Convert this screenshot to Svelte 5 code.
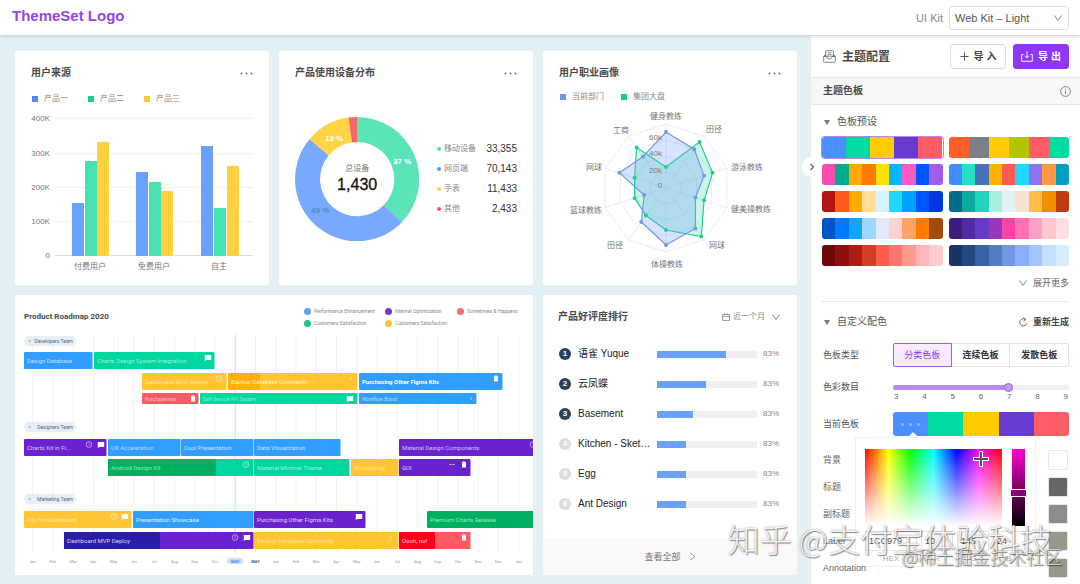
<script>
  const barTicks = [
    { label: '400K', y: 10 },
    { label: '300K', y: 45 },
    { label: '200K', y: 79 },
    { label: '100K', y: 113 },
    { label: '0', y: 147 }
  ];
  const barGroups = [
    { label: '付费用户', cx: 59, bars: [[41, 95], [54, 53], [66, 34]] },
    { label: '免费用户', cx: 123, bars: [[105, 64], [118, 74], [130, 83]] },
    { label: '自主', cx: 188, bars: [[170, 38], [183, 100], [196, 58]] }
  ];
  const barColors = ['#6aa1ff', '#46e2b1', '#ffd23d'];

  function polar(cx, cy, r, deg) {
    const a = (deg * Math.PI) / 180;
    return [cx + r * Math.sin(a), cy - r * Math.cos(a)];
  }
  function ringSlice(from, to, R = 62, r = 37, c = 62) {
    const big = to - from > 180 ? 1 : 0;
    const [x1, y1] = polar(c, c, R, from);
    const [x2, y2] = polar(c, c, R, to);
    const [x3, y3] = polar(c, c, r, to);
    const [x4, y4] = polar(c, c, r, from);
    return `M${x1} ${y1}A${R} ${R} 0 ${big} 1 ${x2} ${y2}L${x3} ${y3}A${r} ${r} 0 ${big} 0 ${x4} ${y4}Z`;
  }
  const slices = [
    { d: ringSlice(0, 134), color: '#5ce4b9' },
    { d: ringSlice(134, 310), color: '#77a9ff' },
    { d: ringSlice(310, 352), color: '#ffd545' },
    { d: ringSlice(352, 360), color: '#fb6468' }
  ];
  const devices = [
    { name: '移动设备', value: '33,355', color: '#4fdfae' },
    { name: '网页端', value: '70,143', color: '#5b97f7' },
    { name: '手表', value: '11,433', color: '#fbd145' },
    { name: '其他', value: '2,433', color: '#f5525c' }
  ];

  const rx = 107;
  const ry = 85;
  const blue = [56, 48, 40, 31, 50, 57, 42, 23, 49, 39];
  const green = [21, 57, 49, 40, 60, 42, 34, 33, 33, 50];
  const toPoints = (vals) => vals.map((v, i) => polar(rx, ry, v, i * 36));
  const asString = (pts) => pts.map((p) => p.join(',')).join(' ');
  const bluePts = toPoints(blue);
  const greenPts = toPoints(green);
  const radarRings = [16, 32, 48, 64].map((r) => asString(toPoints(Array(10).fill(r))));
  const radarLabels = [
    ['健身教练', 107, 13], ['田径', 155, 26], ['游泳教练', 188, 64], ['健美操教练', 192, 106],
    ['网球', 158, 142], ['体操教练', 108, 161], ['田径', 56, 142], ['篮球教练', 27, 107],
    ['网球', 35, 64], ['工商', 62, 27]
  ];

  const roadLegend = [
    ['Performance Enhancement', '#5aa5ee'], ['Internal Optimization', '#7238c8'], ['Sometimes & Happens', '#f2707c'],
    ['Customers Satisfaction', '#1cc58e'], ['Customers Satisfaction', '#f5c242']
  ];
  const months = ['Jan', 'Feb', 'Mar', 'Apr', 'May', 'Jun', 'Jul', 'Aug', 'Sep', 'Oct', 'NOV', 'MAY',
    'Jan', 'Feb', 'Mar', 'Apr', 'May', 'Jun', 'Jul', 'Aug', 'Sep', 'Oct', 'Nov', 'Dec', 'Jan'];
  const teams = [['Developers Team', 1], ['Designers Team', 87], ['Marketing Team', 159]];
  const B = '#309dff';
  const G = '#00d79f';
  const Y = '#ffc535';
  const P = '#6a22cf';
  const R = '#ff5a63';
  const tasks = [
    { x: 0, y: 17, w: 69, c: B, t: 'Design Database', f: '#bfe0ff' },
    { x: 70, y: 17, w: 121, c: G, t: 'Charts Design System Integration', f: '#9af3da', icons: [['chat', 184]] },
    { x: 118, y: 38, w: 85, c: Y, t: 'Dashboard MVP Deploy', f: '#ffe7a8', icons: [['clock', 195]] },
    { x: 204, y: 38, w: 130, c: Y, dw: 32, dc: '#ffb00d', t: 'Backup Database Constantly', f: '#fff0c4', icons: [['info', 327]] },
    { x: 335, y: 38, w: 144, c: B, t: 'Purchasing Other Figma Kits', f: '#fff', bold: true, icons: [['trash', 472]] },
    { x: 118, y: 58, w: 57, h: 11, c: R, t: 'Purchase now', f: '#ffc4c8', icons: [['trash', 169]] },
    { x: 176, y: 58, w: 158, h: 11, c: G, t: 'Self-Service API System', f: '#8df0d4', icons: [['chat', 326]] },
    { x: 335, y: 58, w: 118, h: 11, c: B, t: 'Workflow Boost', f: '#b9dcff', icons: [['info', 447]] },
    { x: 0, y: 104, w: 83, c: P, t: 'Charts Kit in Fi...', f: '#dccbf6', icons: [['clock', 65], ['chat', 77]] },
    { x: 84, y: 104, w: 73, c: B, t: 'UX Acceleration', f: '#b9dcff' },
    { x: 157, y: 104, w: 73, c: B, t: 'Cool Presentation', f: '#c9e5ff' },
    { x: 230, y: 104, w: 87, c: B, t: 'Data Visualization', f: '#c9e5ff' },
    { x: 375, y: 104, w: 136, c: P, t: 'Material Design Components', f: '#d9c6f5', icons: [['clock', 509]] },
    { x: 84, y: 124, w: 146, c: G, dw: 108, dc: '#00b061', t: 'Android Design Kit', f: '#97e6bf', icons: [['clock', 222]] },
    { x: 230, y: 124, w: 96, c: G, t: 'Material Minimal Theme', f: '#9af3da' },
    { x: 327, y: 124, w: 48, c: Y, t: 'Prototyping', f: '#ffe49c' },
    { x: 375, y: 124, w: 72, c: P, t: 'GUI', f: '#dccbf6', icons: [['link', 428], ['trash', 440]] },
    { x: 0, y: 176, w: 108, c: Y, t: 'Fits for Dashboard', f: '#ffe7a8', icons: [['clock', 90], ['chat', 101]] },
    { x: 109, y: 176, w: 121, c: B, t: 'Presentation Showcase', f: '#e6f3ff' },
    { x: 230, y: 176, w: 112, c: P, t: 'Purchasing Other Figma Kits', f: '#e2d4f8', icons: [['chat', 335]] },
    { x: 403, y: 176, w: 108, c: '#00b061', t: 'Premium Charts Release', f: '#9ce8c2' },
    { x: 40, y: 197, w: 190, c: P, dw: 96, dc: '#2a1ea8', t: 'Dashboard MVP Deploy', f: '#d8d4f4', icons: [['clock', 211], ['chat', 223]] },
    { x: 230, y: 197, w: 145, c: Y, t: 'Backup Database Constantly', f: '#ffe49c', icons: [['info', 367]] },
    { x: 375, y: 197, w: 72, c: R, dw: 36, dc: '#fb0019', t: 'Oooh, no!', f: '#ffd9dc', icons: [['trash', 440]] }
  ];

  const ranking = [
    ['语雀 Yuque', 69], ['云凤蝶', 49], ['Basement', 36],
    ['Kitchen - Sket…', 29], ['Egg', 29], ['Ant Design', 29]
  ];

  const presets = [
    ['#4a90ff', '#00dba2', '#ffcb00', '#673bd0', '#ff5d66'],
    ['#ff5e2b', '#7c7f88', '#ffcc05', '#b3c400', '#ff5d66', '#00dba2'],
    ['#fb4bb1', '#00ac8a', '#ffa808', '#ff7a00', '#ffe103', '#00b7ff', '#fb5cbf', '#0055ff', '#a35bea'],
    ['#3f8cff', '#25dfc6', '#4a70bb', '#ffb300', '#ff5b52', '#1fd8ff', '#8b74ee', '#ff9845', '#009fbf'],
    ['#b31414', '#ff5b1c', '#ffab00', '#ffde94', '#d6f4fb', '#1fd8ff', '#00a2ff', '#0055ff', '#0038e0'],
    ['#006d8c', '#0aaa9f', '#23d3bb', '#a8eee1', '#e3f3f4', '#f7e3cf', '#ffbd4d', '#f09000', '#bf3a0c'],
    ['#0053c9', '#007bff', '#0fa5ff', '#9ed7ff', '#e6e8fb', '#ffd1d1', '#ffa366', '#ff7b00', '#a04c08'],
    ['#3f1d7f', '#512aa5', '#673bc8', '#9a36bd', '#ff42a4', '#ff72b2', '#ff9fc6', '#ffc7d0', '#ffdfe3'],
    ['#6e0708', '#8e0e0e', '#ae1c14', '#d03f28', '#ff5b50', '#ff7669', '#ff9a8e', '#ffb6b9', '#ffcccd'],
    ['#183566', '#254880', '#3862a5', '#527dc4', '#7098e2', '#8aaefb', '#a5c4ff', '#c3e0ff', '#d7ecff']
  ];
  const current = presets[0];
  const textColors = [
    ['背景', '#ffffff'], ['标题', '#666666'], ['副标题', '#8c8c8c'], ['Label', '#97978c'], ['Annotation', '#97978c']
  ];
  const channels = [['HEX', '1CC979'], ['R', '10'], ['G', '145'], ['B', '24']];

  let kind = $state('分类色板');
  let count = $state(7);
  let selected = $state(0);
  let fill = $derived(((count - 3) / 6) * 100);
</script>

{#snippet more()}
  <button class="more" aria-label="更多">
    <svg width="13" height="3" viewBox="0 0 13 3"><circle cx="1.5" cy="1.5" r="1" /><circle cx="6.5" cy="1.5" r="1" /><circle cx="11.5" cy="1.5" r="1" /></svg>
  </button>
{/snippet}

{#snippet chevron()}
  <svg class="chev" width="10" height="8" viewBox="0 0 10 8"><path d="M1.5 1.5L5 6.5L8.5 1.5" /></svg>
{/snippet}

<div class="app">
  <header class="top">
    <a class="logo" href="#home">ThemeSet Logo</a>
    <div class="kit">
      <label for="kit">UI Kit</label>
      <div class="select">
        <select id="kit"><option>Web Kit – Light</option><option>Web Kit – Dark</option></select>
        {@render chevron()}
      </div>
    </div>
  </header>

  <div class="body">
    <main class="board">
      <section class="card">
        <div class="head"><h2>用户来源</h2>{@render more()}</div>
        <ul class="legend">
          <li><i style="background:#5089ee"></i>产品一</li>
          <li><i style="background:#22cf93"></i>产品二</li>
          <li><i style="background:#f7c93e"></i>产品三</li>
        </ul>
        <svg class="chart" viewBox="0 0 222 168">
          {#each barTicks as t}
            <line class="grid" class:base={t.label === '0'} x1="24" x2="222" y1={t.y + 0.5} y2={t.y + 0.5} />
            <text x="19" y={t.y + 3} text-anchor="end">{t.label}</text>
          {/each}
          {#each barGroups as g}
            {#each g.bars as b, i}
              <rect x={b[0]} y={b[1]} width="12" height={148 - b[1]} fill={barColors[i]} />
            {/each}
            <text x={g.cx} y="161" text-anchor="middle">{g.label}</text>
          {/each}
        </svg>
      </section>

      <section class="card">
        <div class="head"><h2>产品使用设备分布</h2>{@render more()}</div>
        <div class="donut">
          <svg viewBox="0 0 124 124">
            {#each slices as s}<path d={s.d} fill={s.color} />{/each}
            <text class="pct" x="107" y="47" text-anchor="middle">37 %</text>
            <text class="pct" x="39" y="24" text-anchor="middle">13 %</text>
            <text class="pct dim" x="25" y="96" text-anchor="middle">49 %</text>
            <text x="62" y="54" text-anchor="middle">总设备</text>
            <text class="total" x="62" y="73" text-anchor="middle">1,430</text>
          </svg>
          <ul>
            {#each devices as d}
              <li><i style="background:{d.color}"></i><span>{d.name}</span><b>{d.value}</b></li>
            {/each}
          </ul>
        </div>
      </section>

      <section class="card">
        <div class="head"><h2>用户职业画像</h2>{@render more()}</div>
        <ul class="legend wide">
          <li><i style="background:#6b95f5"></i>当前部门</li>
          <li><i style="background:#12cd8a"></i>集团大盘</li>
        </ul>
        <svg class="chart" viewBox="0 0 222 174">
          {#each radarRings as ring}<polygon class="ring" points={ring} />{/each}
          {#each toPoints(Array(10).fill(64)) as p}<line class="ring" x1={rx} y1={ry} x2={p[0]} y2={p[1]} />{/each}
          <polygon points={asString(greenPts)} fill="#2fd9a0" fill-opacity=".25" stroke="#22cf93" stroke-width="1.2" />
          <polygon points={asString(bluePts)} fill="#6a9bff" fill-opacity=".27" stroke="#6f9ae8" stroke-width="1.2" />
          {#each greenPts as p}<circle cx={p[0]} cy={p[1]} r="2" fill="#22cf93" />{/each}
          {#each bluePts as p}<circle cx={p[0]} cy={p[1]} r="2" fill="#6f9ae8" />{/each}
          <text x="103" y="37" text-anchor="end">60k</text>
          <text x="103" y="53" text-anchor="end">40k</text>
          <text x="103" y="70" text-anchor="end">20k</text>
          <text x="103" y="85" text-anchor="end">0</text>
          {#each radarLabels as l}<text x={l[1]} y={l[2] + 3} text-anchor="middle">{l[0]}</text>{/each}
        </svg>
      </section>

      <section class="card road">
        <div class="roadhead">
          <h2>Product Roadmap 2020</h2>
          <ul>
            {#each roadLegend as l}<li><i style="background:{l[1]}"></i>{l[0]}</li>{/each}
          </ul>
        </div>
        <svg viewBox="0 0 509 235">
          {#each months as m, i}
            {@const x = 8.7 + i * 20.25}
            <line x1={x} x2={x} y1="0" y2="218" stroke={i === 10 ? '#bfdcf5' : '#eff2f5'} />
            {#if i === 10}<rect x={x - 8} y="223" width="16" height="6" rx="3" fill="#c4e1ff" />{/if}
            <text class="month" class:now={i === 10} class:strong={i === 11} {x} y="228" text-anchor="middle">{m}</text>
          {/each}
          {#each teams as t}
            <rect x="0" y={t[1]} width="52" height="10" rx="5" fill="#e8eef5" />
            <path d="M4.5 {t[1] + 4.5}h2.4l-1.2 1.6z" fill="#6b7a90" />
            <text class="team" x="49" y={t[1] + 7} text-anchor="end">{t[0]}</text>
          {/each}
          {#each tasks as k}
            {@const h = k.h ?? 17}
            <rect x={k.x} y={k.y} width={k.w - 0.5} height={h} rx="1" fill={k.c} />
            {#if k.dw}<rect x={k.x} y={k.y} width={k.dw} height={h} rx="1" fill={k.dc} />{/if}
            <text class="task" class:bold={k.bold} class:small={h < 12} x={k.x + 3} y={k.y + h / 2 + 2} fill={k.f}>{k.t}</text>
            {#each k.icons ?? [] as ic}
              <g transform="translate({ic[1]} {k.y + 5.5})">
                {#if ic[0] === 'chat'}<path d="M-3.2 -2.5h6.4v5h-4.8l-1.6 1z" fill="#fff" />
                {:else if ic[0] === 'clock'}<circle r="2.8" fill="none" stroke="#fff" stroke-opacity=".65" stroke-width=".8" /><path d="M0 -1.6V.2H1.4" fill="none" stroke="#fff" stroke-opacity=".65" stroke-width=".6" />
                {:else if ic[0] === 'trash'}<path d="M-2 -2.2h4v4.8q0 .4-.4.4h-3.2q-.4 0-.4-.4zM-1.2 -2.9h2.400v1.100h-2.400z" fill="#fff" />
                {:else if ic[0] === 'link'}<path d="M-2.4 0h1.8M.6 0h1.8" stroke="#fff" stroke-opacity=".8" />
                {:else}<path d="M0 -1.6V-.6M0 0V1.6" stroke="#fff" stroke-opacity=".75" />{/if}
              </g>
            {/each}
          {/each}
        </svg>
      </section>

      <section class="card rank">
        <div class="head">
          <h2>产品好评度排行</h2>
          <button class="month-pick">
            <svg width="8" height="8" viewBox="0 0 8 8"><path d="M.5 1.5h7v6h-7zM.5 3.5h7M2.5 .3v2M5.5 .3v2" /></svg>
            近一个月
            {@render chevron()}
          </button>
        </div>
        <ol>
          {#each ranking as r, i}
            <li>
              <span class="no" class:lead={i < 3}>{i + 1}</span>
              <span class="name">{r[0]}</span>
              <span class="track"><span style="width:{r[1]}%"></span></span>
              <span class="val">83%</span>
            </li>
          {/each}
        </ol>
        <a class="all" href="#all">查看全部
          <svg width="7" height="9" viewBox="0 0 7 9"><path d="M1 1L6 4.5L1 8" /></svg>
        </a>
      </section>
    </main>

    <aside class="panel">
      <button class="fold" aria-label="收起">
        <svg width="6" height="8" viewBox="0 0 6 8"><path d="M1.5 1L4.5 4L1.5 7" /></svg>
      </button>
      <div class="phead">
        <svg width="13" height="13" viewBox="0 0 13 13"><path d="M.7 6.2v5.3q0 .8.8.8h10q.8 0 .8-.8V6.2zM.7 6.2L2.6 4.6M12.3 6.2L10.4 4.6M2.6 6V1.4q0-.7.7-.7h6.4q.7 0 .7.7V6M4.6 2.8h3.8M4.6 4.7h3.8M.7 6.4h2.6q1 2.6 3.2 2.6T9.700 6.400h2.600" /></svg>
        <h2>主题配置</h2>
        <button class="btn">
          <svg width="9" height="9" viewBox="0 0 9 9"><path d="M4.5 .5v8M.5 4.500h8" /></svg>导 入
        </button>
        <button class="btn primary">
          <svg width="12" height="11" viewBox="0 0 12 11"><path d="M2.500 3.500H.7v6.800h10.600V3.500H9.500M6 .2v6.500M3.900 4.700L6 6.900L8.100 4.700" /></svg>导 出
        </button>
      </div>
      <div class="bar">
        <h3>主题色板</h3>
        <svg width="11" height="11" viewBox="0 0 11 11"><circle cx="5.500" cy="5.500" r="4.900" /><path d="M5.500 4.600v3.700M5.500 2.700v1" /></svg>
      </div>

      <div class="section">
        <h4><span class="tri"></span>色板预设</h4>
        <div class="presets">
          {#each presets as p, i}
            <button class="strip" class:on={selected === i} aria-label="色板 {i + 1}" onclick={() => (selected = i)}>
              {#each p as c}<span style="background:{c}"></span>{/each}
            </button>
          {/each}
        </div>
        <button class="link expand">{@render chevron()}展开更多</button>
        <hr />
        <div class="row">
          <h4><span class="tri"></span>自定义配色</h4>
          <button class="link dark">
            <svg width="9" height="10" viewBox="0 0 9 10"><path d="M7.800 6.400A3.600 3.600 0 1 1 6.300 2.300M4.500 .5L6.700 2.500L4.400 4" /></svg>重新生成
          </button>
        </div>

        <div class="form">
          <span>色板类型</span>
          <div class="seg" role="radiogroup" aria-label="色板类型">
            {#each ['分类色板', '连续色板', '发散色板'] as k}
              <label class:on={kind === k}><input type="radio" name="kind" value={k} bind:group={kind} />{k}</label>
            {/each}
          </div>
          <label class="lift" for="count">色彩数目</label>
          <div class="slider">
            <input id="count" type="range" min="3" max="9" bind:value={count}
              style="background:linear-gradient(to right,#b98aee {fill}%,#f0f0f2 {fill}%)" />
            <div class="ticks">{#each [3, 4, 5, 6, 7, 8, 9] as n}<span>{n}</span>{/each}</div>
          </div>
          <span>当前色板</span>
          <div class="strip now">
            {#each current as c, i}
              <button style="background:{c}" aria-label="颜色 {i + 1}">{#if i === 0}<i></i><i></i><i></i><b></b>{/if}</button>
            {/each}
          </div>
        </div>

        <div class="texts">
          {#each textColors as t}
            <div class="trow"><span>{t[0]}</span><button style="background:{t[1]}" aria-label="{t[0]}颜色"></button></div>
          {/each}
          <div class="picker">
            <div class="field">
              <svg width="16" height="16" viewBox="0 0 16 16"><path d="M8 0v16M0 8h16" stroke="#fff" stroke-width="4" /><path d="M8 1v14M1 8h14" stroke="#555" stroke-width="2" /></svg>
            </div>
            <div class="tone"><span></span></div>
            <div class="inputs">
              {#each channels as c}
                <label><input value={c[1]} />{c[0]}</label>
              {/each}
            </div>
          </div>
        </div>
      </div>
    </aside>
  </div>

  <div class="mark big">知乎 @支付宝体验科技</div>
  <div class="mark small">@稀土掘金技术社区</div>
</div>

<style>
  :global(body) { margin: 0; overflow: hidden; }
  * { box-sizing: border-box; }
  .app {
    position: relative; height: 100vh; overflow: hidden; display: flex; flex-direction: column;
    font-family: "Liberation Sans", "Noto Sans CJK SC", sans-serif; font-size: 10px; line-height: 12px;
    color: #444; background: #e5f0f5;
  }
  h2, h3, h4, ul, ol { margin: 0; padding: 0; list-style: none; }
  h2 { font-size: 10px; line-height: 12px; font-weight: 700; color: #4a4a4a; }
  button { font: inherit; color: inherit; border: 0; background: none; padding: 0; margin: 0; }
  svg { flex: none; }
  i { flex: none; }

  .top {
    flex: none; height: 35px; padding: 0 11px 0 12px; display: flex; align-items: center; justify-content: space-between;
    background: #fff; box-shadow: 0 1px 4px rgba(0, 0, 0, .18); position: relative; z-index: 2;
  }
  .logo { font-size: 15px; line-height: 20px; font-weight: 700; padding-bottom: 3px; color: #9544e6; text-decoration: none; }
  .kit { display: flex; align-items: center; gap: 6px; color: #888; font-size: 11px; }
  .select { display: grid; align-items: center; width: 120px; }
  .select > :global(*) { grid-area: 1 / 1; }
  .select :global(.chev) { justify-self: end; margin-right: 6px; pointer-events: none; }
  select {
    appearance: none; font: inherit; color: #555; background: #fff; border: 1px solid #ddd; border-radius: 3px;
    height: 24px; width: 100%; padding: 0 5px;
  }
  .chev path { fill: none; stroke: #888; stroke-width: 1; }

  .body { flex: 1; min-height: 0; display: grid; grid-template-columns: 1fr 269px; }
  .board {
    padding: 16px 14px 9px 15px; display: grid; gap: 10px; align-content: start;
    grid-template-columns: repeat(3, 1fr); grid-template-rows: auto 280px;
  }
  .card { background: #fff; border-radius: 2px; padding: 16px 16px 8px; min-width: 0; display: flex; flex-direction: column; }
  .head { display: flex; justify-content: space-between; align-items: center; height: 12px; }
  .more { display: flex; fill: #777; }
  .legend { display: flex; gap: 20px; margin-top: 14px; padding-left: 1px; font-size: 8px; color: #888; }
  .legend.wide { gap: 17px; margin-top: 12px; }
  .legend li { display: flex; align-items: center; gap: 6px; }
  .legend i { width: 6px; height: 6px; }
  .chart { display: block; width: 100%; }
  .chart text, .donut text { font-size: 8px; fill: #777; }
  .legend + .chart { margin-top: 3px; }
  .legend.wide + .chart { margin-top: 0; }
  .grid { stroke: #efefef; }
  .grid.base { stroke: #ddd; }
  .ring { fill: none; stroke: #e6e6ea; stroke-width: .8; }

  .donut { display: flex; align-items: center; justify-content: space-between; margin-top: 38px; }
  .donut svg { width: 56%; }
  .donut ul { width: 80px; }
  .donut li { display: flex; align-items: center; height: 20px; font-size: 8px; color: #888; }
  .donut li i { width: 4px; height: 4px; border-radius: 50%; margin-right: 3px; }
  .donut b { margin-left: auto; font-weight: 400; font-size: 10px; color: #333; }
  .donut .pct { fill: #fff; font-weight: 700; }
  .donut .dim { fill: #5577b5; font-weight: 400; }
  .donut .total { font-size: 16px; fill: #111; stroke: #111; stroke-width: .3; }

  .road { grid-column: span 2; padding: 10px 0 5px 9px; font-family: Roboto, "Open Sans", sans-serif; }
  .roadhead { display: flex; justify-content: space-between; align-items: center; margin-bottom: 6px; }
  .roadhead h2 { font-size: 8px; font-weight: 700; }
  .roadhead ul { display: grid; grid-template-columns: 81px 72px 76px; }
  .roadhead li { display: flex; align-items: center; gap: 3px; font-size: 5px; line-height: 12px; color: #888; }
  .roadhead li i { width: 7px; height: 7px; border-radius: 50%; }
  .road svg { width: 100%; display: block; }
  .month { font-size: 4px; fill: #999; }
  .month.now { fill: #3a86e0; font-weight: 700; }
  .month.strong { fill: #555; font-weight: 700; }
  .team { font-size: 5px; fill: #56657c; }
  .task { font-size: 6px; }
  .task.small { font-size: 5px; }
  .task.bold { font-weight: 700; }

  .rank { padding: 16px 0 0; }
  .rank .head { padding: 0 16px 0 15px; }
  .month-pick { display: flex; align-items: center; gap: 3px; font-size: 8px; color: #888; }
  .month-pick > svg:first-child path, .all path { fill: none; stroke: #888; stroke-width: .8; }
  .month-pick :global(.chev) { margin-left: 3px; }
  .rank ol { padding: 0 18px 0 16px; margin-top: 16px; }
  .rank li { display: grid; grid-template-columns: 12px 74px 1fr 16px; column-gap: 6px; align-items: center; height: 30px; }
  .no { width: 12px; height: 12px; border-radius: 50%; background: #dcdcdc; color: #fff; font-size: 8px; font-weight: 700; text-align: center; }
  .no.lead { background: #27425a; }
  .name { white-space: nowrap; color: #222; padding-left: 1px; }
  .track { height: 7px; background: #f0f0f0; }
  .track span { display: block; height: 7px; background: #6aa1ff; }
  .val { font-size: 8px; color: #888; }
  .all {
    margin-top: auto; height: 37px; display: flex; align-items: center; justify-content: center; gap: 8px;
    background: #f9f9f9; color: #777; font-size: 9px; text-decoration: none;
  }

  .panel { position: relative; background: #fff; margin-top: 1px; min-width: 0; }
  .fold {
    position: absolute; left: -9px; top: 121px; width: 20px; height: 20px; border-radius: 50%;
    background: #fff; display: flex; align-items: center; justify-content: center;
  }
  .fold path { fill: none; stroke: #666; stroke-width: 1.2; }
  .phead { display: flex; align-items: center; height: 41px; padding: 0 11px 0 12px; }
  .phead > svg path { fill: none; stroke: #666; stroke-width: .8; }
  .phead h2 { font-size: 12px; line-height: 16px; margin: 0 auto 0 6px; }
  .btn {
    display: flex; align-items: center; justify-content: center; gap: 5px; width: 56px; height: 25px;
    border: 1px solid #ddd; border-radius: 3px; color: #444; font-weight: 700; white-space: nowrap;
  }
  .btn path { fill: none; stroke: currentColor; stroke-width: .9; }
  .btn.primary { margin-left: 7px; background: #8f37f7; border-color: #8f37f7; color: #fff; }
  .bar {
    display: flex; align-items: center; justify-content: space-between; height: 28px; padding: 0 9px 0 12px;
    background: #f7f7f7; border: solid #e8e8e8; border-width: 1px 0;
  }
  .bar h3 { font-size: 10px; font-weight: 700; color: #4a4a4a; }
  .bar svg * { fill: none; stroke: #777; stroke-width: .9; }
  .section { padding: 10px 11px 0; }
  h4 { display: flex; align-items: center; gap: 7px; font-size: 10px; line-height: 14px; font-weight: 400; color: #555; padding-left: 2px; }
  .tri { border: solid transparent; border-width: 5px 3px 0; border-top-color: #777; }
  .presets { display: grid; grid-template-columns: 1fr 1fr; gap: 6px; margin-top: 8px; }
  .strip { display: flex; height: 21px; border-radius: 3px; overflow: hidden; }
  .strip > * { flex: 1; height: 100%; }
  .presets .strip.on { box-shadow: 0 0 0 1px #b98aee; }
  .link { display: flex; align-items: center; gap: 5px; font-size: 9px; line-height: 14px; color: #666; }
  .link.dark { color: #444; font-weight: 700; }
  .link.dark path { fill: none; stroke: #555; stroke-width: .9; }
  .expand { margin: 10px 0 0 auto; }
  hr { border: 0; border-top: 1px solid #e6e6e6; margin: 11px 0 13px; }
  .row { display: flex; justify-content: space-between; align-items: center; }
  .form { display: grid; grid-template-columns: 70px 1fr; align-items: center; margin-top: 14px; padding-left: 1px; font-size: 9px; color: #555; }
  .seg { display: grid; grid-template-columns: repeat(3, 1fr); height: 24px; }
  .seg label { display: flex; align-items: center; justify-content: center; border: 1px solid #e3e3e3; color: #333; font-weight: 700; margin-left: -1px; }
  .seg label:first-child { border-radius: 2px 0 0 2px; margin-left: 0; }
  .seg label:last-child { border-radius: 0 2px 2px 0; }
  .seg label.on { position: relative; background: #f8eaff; border-color: #a45cec; color: #8f37f7; font-weight: 400; }
  .seg input { position: absolute; opacity: 0; width: 1px; height: 1px; margin: 0; }
  .slider { padding: 18px 0 11px; }
  .lift { padding-bottom: 5px; }
  .slider input { appearance: none; display: block; width: 100%; height: 5px; margin: 0; border-radius: 2px; }
  .slider input::-webkit-slider-thumb { appearance: none; width: 9px; height: 9px; border-radius: 50%; background: #c49af2; border: 1px solid #9a62dd; }
  .ticks { display: flex; justify-content: space-between; font-size: 8px; line-height: 10px; padding: 2px 1px 0; margin-bottom: -1px; color: #666; }
  .strip.now { height: 24px; }
  .strip.now button { position: relative; display: flex; align-items: center; justify-content: center; gap: 5px; }
  .strip.now i { width: 3px; height: 3px; border-radius: 50%; background: #8dbcff; }
  .strip.now b { position: absolute; bottom: 0; left: 16px; border: solid transparent; border-width: 0 4px 4px; border-bottom-color: #fff; }

  .texts { position: relative; display: grid; gap: 7px; padding: 14px 1px 0; font-size: 9px; color: #666; }
  .trow { display: flex; align-items: center; justify-content: space-between; height: 20px; }
  .trow span { position: relative; z-index: 1; }
  .trow button { width: 20px; height: 20px; border-radius: 2px; border: 1px solid #e6e6e6; }
  .picker {
    position: absolute; left: 33px; right: 33px; top: 1px; padding: 11px 10px 1px 9px; background: #fff; border: 1px solid #f0f0f0;
    display: grid; grid-template-columns: 1fr 13px; gap: 5px 10px;
  }
  .field {
    height: 77px; position: relative;
    background: linear-gradient(to bottom, rgba(255, 255, 255, 0), #fff),
      linear-gradient(to right, #f00, #ff0 17%, #0f0 33%, #0ff 50%, #00f 67%, #f0f 83%, #f00);
  }
  .field svg { position: absolute; left: 85%; top: 10px; transform: translate(-50%, -50%); }
  .tone { position: relative; background: linear-gradient(to bottom, #ff00d4, #000); }
  .tone span { position: absolute; left: -2px; right: -2px; top: 40px; height: 8px; background: #8b0075; border: 1px solid #fff; }
  .inputs { grid-column: 1 / -1; display: grid; grid-template-columns: 52px 1fr 1fr 1fr; gap: 4px; }
  .inputs label { display: flex; flex-direction: column; align-items: center; gap: 2px; font-size: 8px; line-height: 12px; color: #aaa; min-width: 0; }
  .inputs input { width: 100%; height: 20px; border: 1px solid #e3e3e3; font: inherit; font-size: 9px; color: #555; padding: 0 3px; }

  .mark {
    position: absolute; z-index: 5; white-space: nowrap; pointer-events: none; color: rgba(255, 255, 255, .88);
    font-family: "Noto Sans CJK SC", sans-serif; font-weight: 300;
  }
  .mark.big { right: 28px; bottom: 26px; font-size: 32px; line-height: 40px; text-shadow: 0 0 2px rgba(0, 0, 0, .4), 1px 1px 1px rgba(0, 0, 0, .4); }
  .mark.small { right: 18px; bottom: 16px; font-size: 18px; line-height: 24px; text-shadow: 0 0 1px rgba(0, 0, 0, .6), 1px 1px 1px rgba(0, 0, 0, .6); }
</style>
